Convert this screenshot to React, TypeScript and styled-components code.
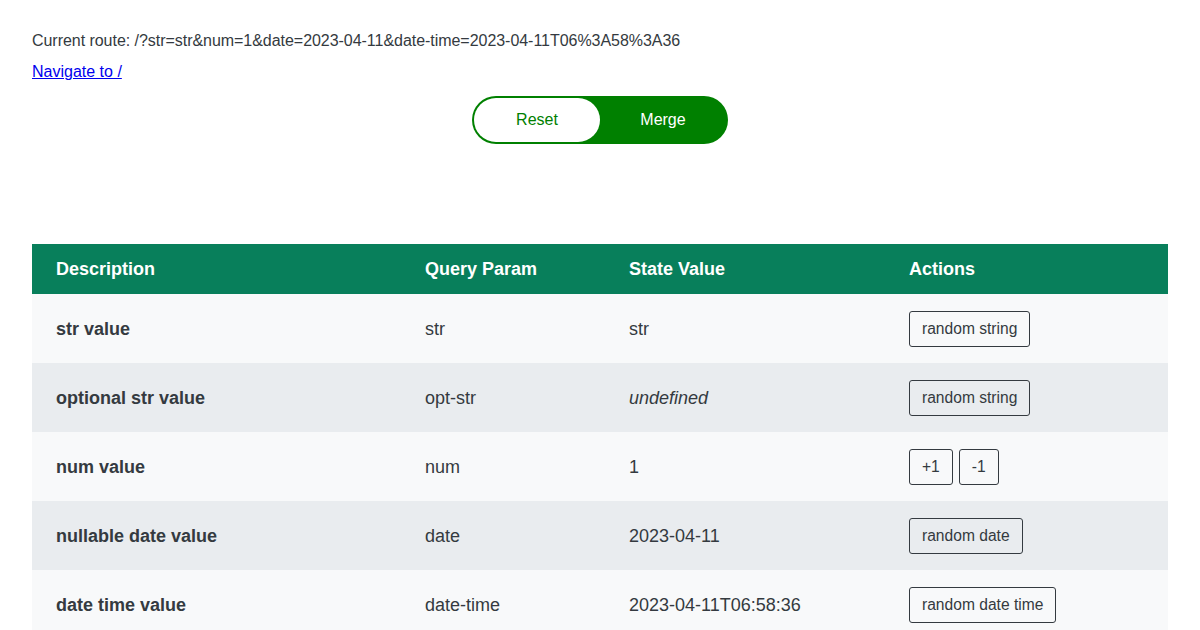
import React from 'react'
import styled, { createGlobalStyle } from 'styled-components';

const GlobalStyle = createGlobalStyle`
  html, body {
    margin: 0;
    padding: 0;
    background: #ffffff;
  }
  body {
    font-family: "Liberation Sans", Arial, sans-serif;
    color: #343a40;
  }
`;

const Page = styled.div`
  padding: 32px 32px 0;
`;

const Route = styled.p`
  margin: 0 0 13px;
  font-size: 16px;
  line-height: 18px;
  letter-spacing: -0.04px;
  color: #343a40;
`;

const NavLink = styled.a`
  display: inline-block;
  font-size: 16px;
  line-height: 18px;
  color: #0000ee;
  text-decoration: underline;
`;

const ToggleRow = styled.div`
  display: flex;
  justify-content: center;
  margin-top: 15px;
`;

const Toggle = styled.div`
  display: flex;
  width: 256px;
  height: 48px;
  box-sizing: border-box;
  padding: 2px;
  border-radius: 24px;
  background: #008000;
`;

const ToggleOption = styled.button<{ $active?: boolean }>`
  flex: 1;
  border: none;
  border-radius: 22px;
  font-family: inherit;
  font-size: 16px;
  cursor: pointer;
  background: ${p => (p.$active ? '#ffffff' : 'transparent')};
  color: ${p => (p.$active ? '#008000' : '#ffffff')};
`;

const Table = styled.table`
  margin-top: 100px;
  width: 1136px;
  border-collapse: collapse;
  table-layout: fixed;
  font-size: 18px;
`;

const HeadCell = styled.th<{ $w: number }>`
  box-sizing: border-box;
  width: ${p => p.$w}px;
  height: 50px;
  padding: 0 24px;
  text-align: left;
  font-weight: bold;
  color: #ffffff;
  background: #087f5b;
`;

const Row = styled.tr<{ $odd?: boolean }>`
  background: ${p => (p.$odd ? '#e9ecef' : '#f8f9fa')};
`;

const Cell = styled.td<{ $bold?: boolean; $italic?: boolean }>`
  box-sizing: border-box;
  height: 69px;
  padding: 1px 24px 0;
  font-weight: ${p => (p.$bold ? 'bold' : 'normal')};
  font-style: ${p => (p.$italic ? 'italic' : 'normal')};
  color: #343a40;
`;

const Actions = styled.div`
  display: flex;
  gap: 6px;
`;

const ActionButton = styled.button`
  height: 36px;
  padding: 0 12px;
  border: 1px solid #343a40;
  border-radius: 3px;
  background: transparent;
  font-family: "Liberation Sans", Arial, sans-serif;
  font-size: 15.6px;
  color: #343a40;
  cursor: pointer;
`;

const rows = [
  { desc: 'str value', param: 'str', value: 'str', actions: ['random string'] },
  { desc: 'optional str value', param: 'opt-str', value: 'undefined', italic: true, actions: ['random string'] },
  { desc: 'num value', param: 'num', value: '1', actions: ['+1', '-1'] },
  { desc: 'nullable date value', param: 'date', value: '2023-04-11', actions: ['random date'] },
  { desc: 'date time value', param: 'date-time', value: '2023-04-11T06:58:36', actions: ['random date time'] },
];

const App = () => {
  return (
    <Page>
      <GlobalStyle />
      <Route>Current route: /?str=str&amp;num=1&amp;date=2023-04-11&amp;date-time=2023-04-11T06%3A58%3A36</Route>
      <NavLink href="#">Navigate to /</NavLink>
      <ToggleRow>
        <Toggle>
          <ToggleOption $active>Reset</ToggleOption>
          <ToggleOption>Merge</ToggleOption>
        </Toggle>
      </ToggleRow>
      <Table>
        <thead>
          <tr>
            <HeadCell $w={369}>Description</HeadCell>
            <HeadCell $w={204}>Query Param</HeadCell>
            <HeadCell $w={280}>State Value</HeadCell>
            <HeadCell $w={283}>Actions</HeadCell>
          </tr>
        </thead>
        <tbody>
          {rows.map((r, i) => (
            <Row key={r.param} $odd={i % 2 === 1}>
              <Cell $bold>{r.desc}</Cell>
              <Cell>{r.param}</Cell>
              <Cell $italic={r.italic}>{r.value}</Cell>
              <Cell>
                <Actions>
                  {r.actions.map(a => (
                    <ActionButton key={a}>{a}</ActionButton>
                  ))}
                </Actions>
              </Cell>
            </Row>
          ))}
        </tbody>
      </Table>
    </Page>
  )
}

export default App
